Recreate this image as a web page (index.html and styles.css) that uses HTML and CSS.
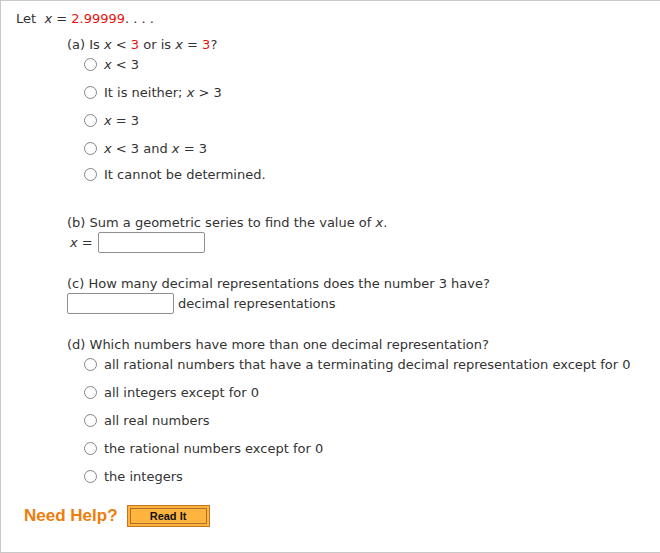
FILE: index.html
```html
<!DOCTYPE html>
<html>
<head>
<meta charset="utf-8">
<link rel="stylesheet" href="styles.css">
</head>
<body>
<div class="frame">
  <div class="line intro">Let&nbsp; <i>x</i> = <span class="red">2.99999</span>. . . .</div>

  <div class="part part-a">
    <div class="line">(a) Is <i>x</i> &lt; <span class="red">3</span> or is <i>x</i> = <span class="red">3</span>?</div>
    <div class="options">
      <div class="opt"><span class="radio"></span><span><i>x</i> &lt; 3</span></div>
      <div class="opt"><span class="radio"></span><span>It is neither; <i>x</i> &gt; 3</span></div>
      <div class="opt"><span class="radio"></span><span><i>x</i> = 3</span></div>
      <div class="opt"><span class="radio"></span><span><i>x</i> &lt; 3 and <i>x</i> = 3</span></div>
      <div class="opt opt-tight"><span class="radio"></span><span>It cannot be determined.</span></div>
    </div>
  </div>

  <div class="part part-b">
    <div class="line">(b) Sum a geometric series to find the value of <i>x</i>.</div>
    <div class="answer"><span class="eq"><i>x</i> =</span><span class="box"></span></div>
  </div>

  <div class="part part-c">
    <div class="line">(c) How many decimal representations does the number 3 have?</div>
    <div class="answer"><span class="box"></span><span class="after">decimal representations</span></div>
  </div>

  <div class="part part-d">
    <div class="line">(d) Which numbers have more than one decimal representation?</div>
    <div class="options">
      <div class="opt"><span class="radio"></span><span>all rational numbers that have a terminating decimal representation except for 0</span></div>
      <div class="opt"><span class="radio"></span><span>all integers except for 0</span></div>
      <div class="opt"><span class="radio"></span><span>all real numbers</span></div>
      <div class="opt"><span class="radio"></span><span>the rational numbers except for 0</span></div>
      <div class="opt"><span class="radio"></span><span>the integers</span></div>
    </div>
  </div>

  <div class="help">
    <span class="help-label">Need Help?</span>
    <span class="btn"><span class="btn-inner">Read It</span></span>
  </div>
</div>
</body>
</html>
```

FILE: styles.css
```css
html, body {
  margin: 0;
  padding: 0;
  background: #fff;
  overflow: hidden;
}
body {
  font-family: "DejaVu Sans", Verdana, sans-serif;
  font-size: 13px;
  color: #333;
}
.frame {
  box-sizing: border-box;
  height: 553px;
  border: 1px solid #c8c8c8;
  border-right: none;
  padding: 9px 0 0 15px;
}
.line {
  height: 16px;
  padding-top: 1px;
  line-height: 16px;
  white-space: nowrap;
}
i {
  font-style: italic;
}
.red {
  color: #e8120c;
}
.part {
  margin-left: 51px;
}
.part-a {
  margin-top: 9px;
}
.part-b {
  margin-top: 30px;
}
.part-c,
.part-d {
  margin-top: 22px;
}
.options {
  margin-top: 1px;
  margin-left: 17px;
  display: flex;
  flex-direction: column;
  gap: 8px;
}
.opt {
  height: 20px;
  display: flex;
  align-items: center;
  gap: 7px;
  white-space: nowrap;
}
.opt-tight {
  margin-top: -2px;
}
.radio {
  box-sizing: border-box;
  width: 13px;
  height: 13px;
  border: 1.5px solid #858585;
  border-radius: 50%;
  flex: none;
}
.answer {
  margin-top: 1px;
  height: 21px;
  display: flex;
  align-items: center;
}
.eq {
  margin-right: 5px;
}
.box {
  box-sizing: border-box;
  width: 107px;
  height: 21px;
  border: 1px solid #8f8f8f;
  border-radius: 2px;
  background: #fff;
}
.after {
  margin-left: 4px;
}
.part-b .answer {
  padding-left: 3px;
}
.help {
  margin-top: 19px;
  margin-left: 8px;
  display: flex;
  align-items: center;
  gap: 9px;
}
.help-label {
  font-family: "Liberation Sans", Arial, sans-serif;
  font-weight: bold;
  font-size: 17px;
  color: #ee7d0c;
}
.btn {
  box-sizing: border-box;
  width: 83px;
  height: 22px;
  padding: 2px;
  background: #ffb440;
  border: 1px solid #c77620;
  display: flex;
}
.btn-inner {
  flex: 1;
  border: 1px solid #b06f25;
  font-family: "Liberation Sans", Arial, sans-serif;
  font-weight: bold;
  font-size: 11px;
  color: #111;
  display: flex;
  align-items: center;
  justify-content: center;
}
```
